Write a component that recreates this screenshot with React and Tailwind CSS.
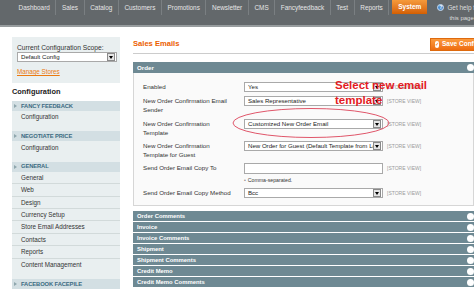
const navItems = ['Dashboard', 'Sales', 'Catalog', 'Customers', 'Promotions', 'Newsletter', 'CMS', 'Fancyfeedback', 'Test', 'Reports']

const rows = [
  { label: ['Enabled'], value: 'Yes', kind: 'select', h: 'h-[14px]' },
  { label: ['New Order Confirmation Email', 'Sender'], value: 'Sales Representative', kind: 'select', h: 'h-[23px]' },
  { label: ['New Order Confirmation', 'Template'], value: 'Customized New Order Email', kind: 'select', h: 'h-[22px]' },
  { label: ['New Order Confirmation', 'Template for Guest'], value: 'New Order for Guest (Default Template from Locale)', kind: 'select', h: 'h-[22px]' },
  { label: ['Send Order Email Copy To'], value: '', kind: 'input', note: 'Comma-separated.', h: 'h-[25px]' },
  { label: ['Send Order Email Copy Method'], value: 'Bcc', kind: 'select', h: 'h-[18px]' },
]

const sections = ['Order Comments', 'Invoice', 'Invoice Comments', 'Shipment', 'Shipment Comments', 'Credit Memo', 'Credit Memo Comments']

function Arrow() {
  return (
    <div className="w-[8px] h-[8px] mr-[1px] flex-shrink-0 bg-[#e4e4e4] border border-[#8a8a8a] flex items-center justify-center">
      <div className="w-0 h-0 border-l-[2px] border-r-[2px] border-t-[3px] border-l-transparent border-r-transparent border-t-black" />
    </div>
  )
}

function Select({ value, width = 'w-[139px]' }) {
  return (
    <div className={`${width} h-[10px] bg-white border border-[#a9a9a9] flex items-center`}>
      <span className="flex-1 min-w-0 pl-[3px] text-[6.1px] leading-none text-[#222] whitespace-nowrap overflow-hidden">{value}</span>
      <Arrow />
    </div>
  )
}

function SideHeader({ title }) {
  return (
    <div className="h-[10px] bg-[#d3dfe3] flex items-center">
      <div className="ml-[2px] w-0 h-0 border-t-[2px] border-b-[2px] border-l-[3px] border-t-transparent border-b-transparent border-l-[#8fa6ad]" />
      <span className="ml-[4px] text-[5.8px] font-bold text-[#3b6b82] tracking-[-0.1px]">{title}</span>
    </div>
  )
}

function SideGroup({ title, items }) {
  return (
    <div className="pb-[8px]">
      <SideHeader title={title} />
      {items.map((it, i) => (
        <div
          key={it}
          className={`h-[12.4px] flex items-center pl-[9px] text-[6.3px] text-[#333] ${i < items.length - 1 ? 'border-b border-[#d2dada]' : ''}`}
        >
          {it}
        </div>
      ))}
    </div>
  )
}

export default function App() {
  return (
    <div className="relative w-[474px] h-[290px] overflow-hidden bg-white font-['Liberation_Sans',Arial,sans-serif]">
      {/* top navigation */}
      <div className="h-[27px] bg-[#63686b] border-b-[2px] border-[#979c9e] flex items-start pl-[13px]">
        {navItems.map((n) => (
          <div key={n} className="h-[15px] px-[5.6px] flex items-center border-r border-[#7a7f82] text-[6.4px] text-[#e6e6e6]">
            {n}
          </div>
        ))}
        <div className="h-[14px] px-[6px] ml-[3px] flex items-center bg-gradient-to-b from-[#f59a3a] to-[#d45f00] text-[6.5px] font-bold text-white">
          System
        </div>
        <div className="ml-[10px] flex flex-col">
          <div className="h-[15px] flex items-center gap-[3px] text-[6.4px] text-[#ddd] whitespace-nowrap">
            <span className="w-[7px] h-[7px] rounded-full bg-[#4f8fd1] border border-[#c9dcf0] flex items-center justify-center text-[5px] font-bold text-white leading-none">?</span>
            Get help for
          </div>
          <div className="pl-[12px] text-[6px] text-[#ddd] whitespace-nowrap leading-none">this page</div>
        </div>
      </div>

      <div className="flex">
        {/* left sidebar */}
        <div className="ml-[12px] mt-[10px] w-[108px] flex-shrink-0 bg-[#e9eff0]">
          <div className="h-[46px] px-[5px] pt-[6px]">
            <div className="text-[6.7px] text-[#333] leading-[9px]">Current Configuration Scope:</div>
            <Select value="Default Config" width="w-[100px]" />
            <div className="mt-[5px] text-[6.3px] text-[#eb7a10] underline">Manage Stores</div>
          </div>
          <div className="h-[18px] bg-white flex items-center text-[7.4px] font-bold text-[#222]">Configuration</div>
          <SideGroup title="FANCY FEEDBACK" items={['Configuration']} />
          <SideGroup title="NEGOTIATE PRICE" items={['Configuration']} />
          <SideGroup
            title="GENERAL"
            items={['General', 'Web', 'Design', 'Currency Setup', 'Store Email Addresses', 'Contacts', 'Reports', 'Content Management']}
          />
          <SideHeader title="FACEBOOK FACEPILE" />
        </div>

        {/* main content */}
        <div className="ml-[13px] w-[343px] flex-shrink-0 pr-[2px]">
          <div className="mt-[10px] h-[14px] flex items-center justify-between border-b border-[#cccccc] pb-[2px] box-content">
            <span className="text-[7.6px] font-bold text-[#eb5e00]">Sales Emails</span>
            <div className="h-[13px] w-[46px] -mr-[2px] bg-gradient-to-b from-[#fb9a3c] to-[#ee6c0c] border border-[#de6a0e] flex items-center pl-[4px] gap-[3px] whitespace-nowrap">
              <span className="w-[7px] h-[7px] rounded-full bg-white flex items-center justify-center text-[5px] font-bold text-[#f07a17] leading-none">✓</span>
              <span className="text-[6.5px] font-bold text-white">Save Config</span>
            </div>
          </div>

          {/* Order panel */}
          <div className="mt-[8px]">
            <div className="h-[11px] bg-[#6e8993] flex items-center justify-between pl-[4px]">
              <span className="text-[6.2px] font-bold text-white">Order</span>
              <span className="w-[7px] h-[7px] rounded-full bg-white" />
            </div>
            <div className="h-[133px] bg-[#fafafa] border border-t-0 border-[#d6d6d6] pt-[9px] pl-[9px]">
              {rows.map((r, i) => (
                <div key={i} className={`${r.h} flex items-start`}>
                  <div className="w-[101px] text-[6.2px] leading-[9px] text-[#333]">
                    {r.label.map((l) => (
                      <div key={l}>{l}</div>
                    ))}
                  </div>
                  <div className="flex flex-col">
                    {r.kind === 'select' ? (
                      <Select value={r.value} />
                    ) : (
                      <div className="w-[139px] h-[11px] bg-white border border-[#a9a9a9]" />
                    )}
                    {r.note && (
                      <div className="mt-[3px] text-[5.2px] text-[#333] flex items-center gap-[2px]">
                        <span className="text-[#888]">•</span>
                        {r.note}
                      </div>
                    )}
                  </div>
                  <span className="ml-[4px] mt-[2px] text-[5px] text-[#9a9a9a] whitespace-nowrap">[STORE VIEW]</span>
                </div>
              ))}
            </div>
          </div>

          {/* collapsed sections */}
          <div className="mt-[5px] flex flex-col gap-[1px]">
            {sections.map((s) => (
              <div key={s} className="h-[10px] bg-[#6e8993] flex items-center justify-between pl-[4px]">
                <span className="text-[5.9px] font-bold text-white">{s}</span>
                <span className="w-[7px] h-[7px] rounded-full bg-white" />
              </div>
            ))}
          </div>
        </div>
      </div>

      {/* red annotation */}
      <div className="absolute left-[335px] top-[78px] text-[11.5px] leading-[15px] font-bold text-[#e31b23] whitespace-nowrap">
        <div>Select new email</div>
        <div>template</div>
      </div>
      <svg className="absolute left-0 top-0 pointer-events-none" width="474" height="290">
        <ellipse cx="311" cy="123" rx="78" ry="14.5" fill="none" stroke="#e0566a" strokeWidth="1" />
      </svg>
    </div>
  )
}
